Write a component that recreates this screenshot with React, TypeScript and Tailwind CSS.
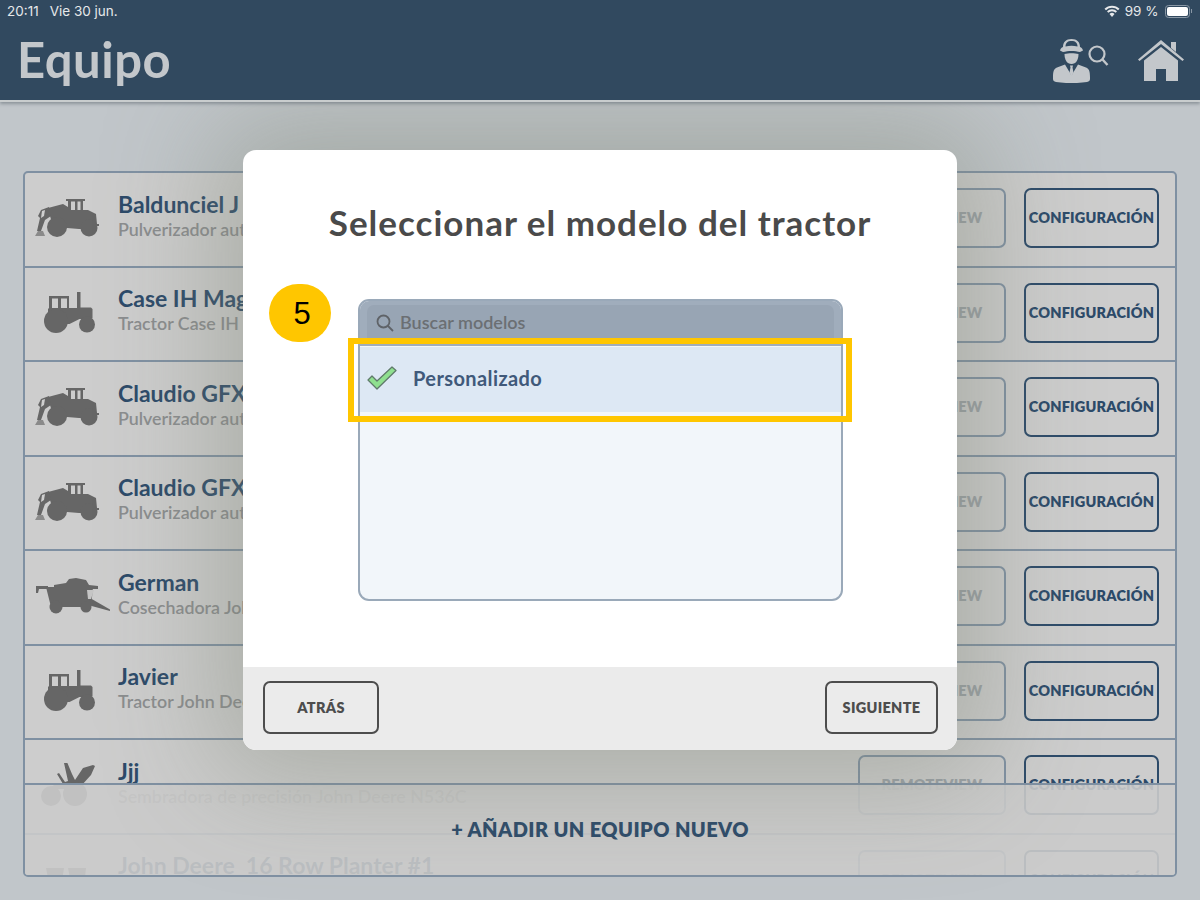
import React from "react";

const sans = "font-['Lato','Noto_Sans',sans-serif]";
const firstName = "Baldunciel J";

function Tractor() {
  return (
    <svg width="52" height="42" viewBox="0 0 52 42" fill="#666">
      <path fillRule="evenodd" d="M5 4h20v13H5zM8 6.500v9.500h6V6.500zM17 6.500v9.500h6V6.500z" />
      <path d="M33 0h3.500v15.500H47l1.500 1.500 0 9-4 1-9 0-10 5H18L4 24l0-7 1-1h28z" />
      <circle cx="12" cy="29" r="12" />
      <circle cx="43" cy="32.500" r="8" />
    </svg>
  );
}

function Sprayer() {
  return (
    <svg width="66" height="38" viewBox="0 0 66 38" fill="#666">
      <path fillRule="evenodd" d="M31 0h19v2h-2v11H33V2h-2zM36 2.500V11h4V2.500zM42.500 2.500V11h3V2.500z" />
      <path d="M13 9l15-4 5 3v3h20l8 4 1 10h2v2h-3l-2 3H44L32 29 26 33l-8-6-3-10z" />
      <circle cx="22" cy="28" r="10" />
      <circle cx="54" cy="29" r="8.500" />
      <path d="M6 11l8-3 2 9-6 4-4 11H2l3-13-2-2z" />
      <path d="M0 37l3-5h5l2 5z" fill="#8a8a8a" />
      <path d="M7 12l3-1-1 6-3 2z" fill="#cfcfcf" />
    </svg>
  );
}

function Combine() {
  return (
    <svg width="74" height="36" viewBox="0 0 74 36" fill="#666">
      <path d="M0 8h12v3H3l-1 4H0z" />
      <path d="M10 9h47l-2 20H15z" />
      <path d="M18 7l12-2 3-4 7-1 10 2 3 5 9 1v3H18z" />
      <path d="M54 20l20 11.500v1.500l-22-6z" />
      <path d="M51 12h7l-3 9h-3z" fill="#c5c5c5" />
      <circle cx="20" cy="29" r="6.500" />
      <circle cx="50" cy="29" r="5.500" />
    </svg>
  );
}

function Planter() {
  return (
    <svg width="62" height="44" viewBox="0 0 62 44" fill="#666">
      <path d="M25 0l3-1 5 12 3 6 8-12 10-3 2 1-4 9-10 11-2 3H10l5-4 9-1-6-10 2-1 6 9 3-1z" />
      <circle cx="12" cy="33" r="10" />
      <circle cx="36" cy="31" r="12" />
    </svg>
  );
}

function Seeder() {
  return (
    <svg width="52" height="30" viewBox="0 0 52 30" fill="#666">
      <path d="M2 3h18l-3 20H6zM24 3h18l-2 20H28z" />
    </svg>
  );
}

function Row({ icon, name, sub, iconOffset = "" }: { icon: React.ReactNode; name: string; sub: string; iconOffset?: string }) {
  return (
    <div className="h-[94.5px] shrink-0 border-b-2 border-[#7f90a2] flex items-start">
      <div className={"w-[93px] h-[90px] flex items-center justify-center " + iconOffset}>{icon}</div>
      <div className="flex-1 pt-[16.5px] min-w-0">
        <div className={"text-[23px] leading-[28px] font-bold text-[#2c4a69] whitespace-pre " + sans}>{name}</div>
        <div className={"text-[17.8px] leading-[22px] font-semibold text-[#8a8c8e] whitespace-nowrap " + sans}>{sub}</div>
      </div>
      <div className="pt-[15px] flex gap-[18px] pr-[16px]">
        <div className={"w-[148px] h-[60px] rounded-[7px] border-2 border-[#7f90a2] flex items-center justify-center text-[14.5px] font-extrabold tracking-[0.2px] text-[#9aa0a5] " + sans}>
          REMOTEVIEW
        </div>
        <div className={"w-[135px] h-[60px] rounded-[7px] border-2 border-[#2c4a69] flex items-center justify-center text-[14.5px] font-extrabold tracking-[0.2px] text-[#2c4a69] " + sans}>
          CONFIGURACIÓN
        </div>
      </div>
    </div>
  );
}

export default function App() {
  return (
    <div className="relative w-[1200px] h-[900px] overflow-hidden bg-[#c1c6ca]">
      <header className="relative z-30 h-[102px] bg-[#31495f] border-b-2 border-[#c9cdce] shadow-[0_2px_3px_rgba(90,100,110,0.5)]">
        <div className="flex items-center justify-between h-[22px] pl-[7px] pr-[8px] text-[13.5px] text-[#e6e8ea] font-['Inter','Liberation_Sans',sans-serif]">
          <div className="flex gap-[11px]">
            <span>20:11</span>
            <span>Vie 30 jun.</span>
          </div>
          <div className="flex items-center gap-[5px]">
            <svg width="16" height="12" viewBox="0 0 16 12" fill="#e6e8ea">
              <path d="M8 12L5.500 9a3.500 3.500 0 0 1 5 0z" />
              <path d="M4.300 7.700L3 6.300a7 7 0 0 1 10 0l-1.300 1.400a5.200 5.200 0 0 0-7.400 0z" />
              <path d="M2 5.300L.5 3.800a10.500 10.500 0 0 1 15 0L14 5.300a8.500 8.500 0 0 0-12 0z" />
            </svg>
            <span>99 %</span>
            <div className="flex items-center gap-[1px] ml-[1px]">
              <div className="w-[25px] h-[13px] rounded-[3.500px] border border-[#8a98a6] p-[1px]">
                <div className="w-full h-full rounded-[2px] bg-white" />
              </div>
              <div className="w-[1.500px] h-[4px] bg-[#8a98a6]" />
            </div>
          </div>
        </div>
        <div className="flex items-center justify-between h-[78px] pl-[17px] pr-[16px]">
          <h1 className={"text-[49px] leading-none font-bold text-[#c3c7cb] tracking-[0.5px] -mt-[3px] " + sans}>Equipo</h1>
          <div className="flex items-center gap-[29px] -mt-[1px]">
            <svg width="56" height="44" viewBox="0 0 56 44" fill="#c3c7cb">
              <path fillRule="evenodd" d="M10 8c0-5 3-8 8.500-8S27 3 27 8c1.500.5 2.500 1.500 3 3.500l-3 1.500c-5-1.500-12-1.500-17 0l-3-1.500c.5-2 1.500-3 3-3.500zM12.500 7.500c4-1 8-1 12 0 0-3.500-2-5.500-6-5.500s-6 2-6 5.500z" />
              <path d="M11.500 15c4-1 10-1 14 0 0 6-2.500 10-7 10s-7-4-7-10z" />
              <path d="M0 38c0-6 1-8 4-9.500l8-3 6.500 11 6.500-11 8 3c3 1.500 4 3.500 4 9.500v2c0 1.500-1 2.500-3 3-9 1.500-22 1.500-31 0-2-.5-3-1.500-3-3z" />
              <path d="M17 26.500h3l-.5 2 1 5-2 4-2-4 1-5z" />
              <circle cx="44" cy="15" r="7.500" fill="none" stroke="#c3c7cb" strokeWidth="2.200" />
              <path d="M49.500 20.500l5 5.500" stroke="#c3c7cb" strokeWidth="2.400" />
            </svg>
            <svg width="46" height="41" viewBox="0 0 46 41" fill="#c3c7cb">
              <path d="M33 2h5v10l-5-4z" />
              <path d="M23 0L46 19.500l-1.500 1.500L23 4 1.500 21 0 19.500z" />
              <path d="M6 20.500L23 7l17 13.500V41H28V29H18v12H6z" />
            </svg>
          </div>
        </div>
      </header>

      <main className="relative mx-[23px] mt-[69px] h-[706px] rounded-[5px] border-2 border-[#7f90a2] bg-[#cdcdcd] overflow-hidden flex flex-col">
        <Row icon={<Sprayer />} iconOffset="pr-[8px]" name={firstName} sub="Pulverizador automotriz" />
        <Row icon={<Tractor />} iconOffset="pr-[4px]" name="Case IH Magnum" sub="Tractor Case IH Magnum" />
        <Row icon={<Sprayer />} iconOffset="pr-[8px]" name="Claudio GFX" sub="Pulverizador automotriz" />
        <Row icon={<Sprayer />} iconOffset="pr-[8px]" name="Claudio GFX" sub="Pulverizador automotriz" />
        <Row icon={<Combine />} iconOffset="pl-[2px]" name="German" sub="Cosechadora John Deere" />
        <Row icon={<Tractor />} iconOffset="pr-[4px]" name="Javier" sub="Tractor John Deere" />
        <Row icon={<Planter />} iconOffset="pr-[4px]" name="Jjj" sub="Sembradora de precisión John Deere N536C" />
        <Row icon={<Seeder />} iconOffset="pr-[4px]" name="John Deere  16 Row Planter #1" sub="" />
        <div className="absolute left-0 right-0 bottom-0 h-[92px] border-t-2 border-[#7f90a2] bg-[#cbcbcb]/90 flex items-center justify-center pb-[2px]">
          <span className={"text-[20px] font-extrabold tracking-[0.4px] text-[#2c4a69] " + sans}>+ AÑADIR UN EQUIPO NUEVO</span>
        </div>
      </main>

      <section className="absolute z-20 left-[243px] top-[150px] w-[714px] h-[600px] rounded-[13px] bg-white overflow-hidden shadow-[0_0_110px_30px_rgba(125,130,115,0.42)] flex flex-col">
        <div className="flex-1 flex flex-col items-center">
          <h2 className={"mt-[49px] text-[35px] leading-[46px] font-bold text-[#4a4a4a] tracking-[1px] " + sans}>
            Seleccionar el modelo del tractor
          </h2>
          <div className="mt-[54px] ml-[1px] w-[485px] h-[302px] rounded-[11px] border-2 border-[#9aa9b9] bg-[#f2f6fa] overflow-hidden">
            <div className="h-[45px] bg-[#a0adbc] px-[7px] pt-[4px]">
              <div className="h-[35px] rounded-t-[7px] bg-[#98a5b4] flex items-center gap-[6px] pl-[9px]">
                <svg width="18" height="18" viewBox="0 0 18 18" fill="none" stroke="#5f6368" strokeWidth="1.800">
                  <circle cx="7.500" cy="7.500" r="6" />
                  <path d="M12 12l5 5" />
                </svg>
                <span className={"text-[18px] font-semibold text-[#6b6f73] " + sans}>Buscar modelos</span>
              </div>
            </div>
            <div className="mt-[1px] h-[65px] bg-[#dde8f4] flex items-center pl-[7px] gap-[16px] pb-[4px]">
              <svg width="30" height="24" viewBox="0 0 30 24">
                <path d="M1 14l4-4 5 5L25 1l4 3.500L10 23z" fill="#8fe08f" stroke="#5f7a6a" strokeWidth="1.300" strokeLinejoin="round" />
              </svg>
              <span className={"text-[20px] font-bold tracking-[0.4px] text-[#40597a] " + sans}>Personalizado</span>
            </div>
          </div>
        </div>
        <div className="h-[83px] bg-[#ebebeb] flex items-start justify-between pl-[20px] pr-[19px] pt-[14px]">
          <div className={"w-[116px] h-[53px] rounded-[7px] border-2 border-[#4d4d4d] flex items-center justify-center text-[14.5px] font-extrabold tracking-[0.3px] text-[#4d4d4d] " + sans}>
            ATRÁS
          </div>
          <div className={"w-[113px] h-[53px] rounded-[7px] border-2 border-[#4d4d4d] flex items-center justify-center text-[14.5px] font-extrabold tracking-[0.3px] text-[#4d4d4d] " + sans}>
            SIGUIENTE
          </div>
        </div>
      </section>

      <div className="absolute z-40 left-[269px] top-[284px] w-[62px] h-[58px] rounded-full bg-[#ffc600] flex items-center justify-center pl-[4px] pt-[3px] text-[31px] text-black font-['Liberation_Sans',sans-serif]">
        5
      </div>
      <div className="absolute z-40 left-[348px] top-[338px] w-[504px] h-[84px] border-[6px] border-[#ffc600]" />
    </div>
  );
}
